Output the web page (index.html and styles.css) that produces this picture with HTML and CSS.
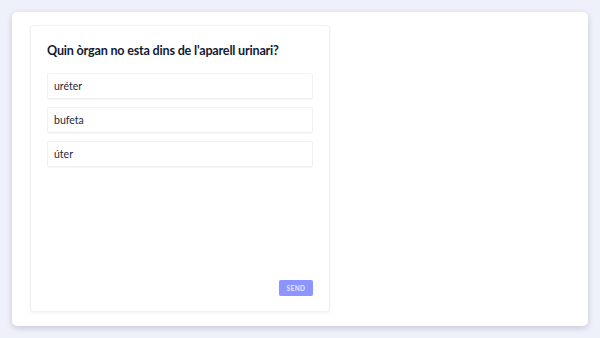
FILE: index.html
```html
<!DOCTYPE html>
<html>
<head>
<meta charset="utf-8">
<link rel="stylesheet" href="styles.css">
</head>
<body>
<div class="page">
  <div class="quiz">
    <h1 class="question">Quin òrgan no esta dins de l'aparell urinari?</h1>
    <div class="options">
      <div class="option">uréter</div>
      <div class="option">bufeta</div>
      <div class="option">úter</div>
    </div>
    <div class="actions">
      <button class="send">SEND</button>
    </div>
  </div>
</div>
</body>
</html>
```
FILE: styles.css
```css
html, body {
  margin: 0;
  padding: 0;
}
body {
  background: #eff1fa;
  font-family: "Lato", "Noto Sans", sans-serif;
  width: 600px;
  height: 338px;
  overflow: hidden;
}
.page {
  margin: 12px;
  height: 314px;
  background: #ffffff;
  border-radius: 5px;
  box-shadow: 0 2px 6px rgba(120, 125, 160, 0.35);
  box-sizing: border-box;
  padding: 13px 0 0 18px;
}
.quiz {
  width: 300px;
  height: 287px;
  box-sizing: border-box;
  border: 1px solid #eef0f3;
  border-radius: 3px;
  box-shadow: 0 1px 3px rgba(0, 0, 0, 0.06);
  padding: 16px 16px 15px 16px;
  display: flex;
  flex-direction: column;
}
.question {
  margin: 0;
  font-size: 12.6px;
  font-weight: 700;
  color: #131a33;
  line-height: 18px;
  letter-spacing: -0.2px;
  white-space: nowrap;
}
.options {
  margin-top: 13px;
  display: flex;
  flex-direction: column;
  gap: 8px;
}
.option {
  height: 26px;
  box-sizing: border-box;
  border: 1px solid #f0f1f4;
  border-radius: 2px;
  box-shadow: 0 1px 1px rgba(0, 0, 0, 0.04);
  padding: 0 6px;
  display: flex;
  align-items: center;
  font-size: 10.5px;
  color: #222a3a;
}
.actions {
  margin-top: auto;
  display: flex;
  justify-content: flex-end;
}
.send {
  width: 34px;
  height: 16px;
  border: none;
  border-radius: 2px;
  background: #8c94ff;
  color: #dfe2ff;
  font-family: "Lato", sans-serif;
  font-size: 6.5px;
  font-weight: 900;
  letter-spacing: 0.4px;
  padding: 0;
}
```
